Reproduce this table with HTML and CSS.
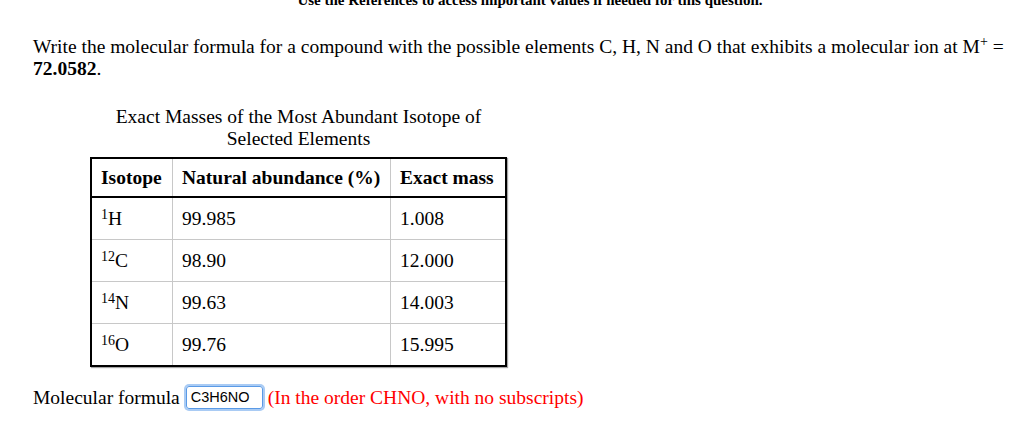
FILE: index.html
```html
<!DOCTYPE html>
<html>
<head>
<meta charset="utf-8">
<link rel="stylesheet" href="styles.css">
</head>
<body>
<div class="refs">Use the References to access important values if needed for this question.</div>
<div class="question">
  <p class="prompt">Write the molecular formula for a compound with the possible elements C, H, N and O that exhibits a molecular ion at M<sup class="charge">+</sup> = <b>72.0582</b>.</p>
  <table class="iso">
    <caption>Exact Masses of the Most Abundant Isotope of Selected Elements</caption>
    <thead>
      <tr><th class="c1">Isotope</th><th class="c2">Natural abundance (%)</th><th class="c3">Exact mass</th></tr>
    </thead>
    <tbody>
      <tr><td><sup>1</sup>H</td><td>99.985</td><td>1.008</td></tr>
      <tr><td><sup>12</sup>C</td><td>98.90</td><td>12.000</td></tr>
      <tr><td><sup>14</sup>N</td><td>99.63</td><td>14.003</td></tr>
      <tr><td><sup>16</sup>O</td><td>99.76</td><td>15.995</td></tr>
    </tbody>
  </table>
  <div class="answer">
    <span>Molecular formula</span>
    <span class="field">C3H6NO</span>
    <span class="hint">(In the order CHNO, with no subscripts)</span>
  </div>
</div>
</body>
</html>
```
FILE: styles.css
```css
html, body {
  margin: 0;
  padding: 0;
  background: #fff;
}
body {
  font-family: "Liberation Serif", "Times New Roman", serif;
  font-size: 19.5px;
  color: #000;
  width: 1024px;
  height: 435px;
  overflow: hidden;
}
.refs {
  font-weight: bold;
  font-size: 15px;
  line-height: 18px;
  text-align: center;
  padding-left: 36px;
  margin-top: -9px;
}
.question {
  padding-left: 33px;
}
.prompt {
  margin: 27px 0 0 0;
  line-height: 22px;
}
.charge {
  font-size: 14px;
  line-height: 0;
}
.iso {
  margin: 26px 0 0 57px;
  border-collapse: collapse;
  border: 2px solid #000;
  box-shadow: 1px 1px 1px rgba(0,0,0,0.35);
}
.iso caption {
  line-height: 22px;
  padding: 0 20px 7px;
}
.iso th {
  font-weight: bold;
  text-align: left;
  height: 37px;
  padding: 0 9px;
  border-bottom: 2px solid #000;
  border-right: 1px solid #c8c8c8;
  white-space: nowrap;
}
.iso td {
  height: 41px;
  padding: 0 9px;
  border: 1px solid #c8c8c8;
}
.iso .c1 { width: 62px; }
.iso .c2 { width: 199px; }
.iso .c3 { width: 96px; }
.iso sup {
  font-size: 14px;
  line-height: 0;
  vertical-align: 6px;
}
.answer {
  margin-top: 19px;
  display: flex;
  align-items: center;
  gap: 3px;
}
.field {
  display: inline-block;
  font-family: "Liberation Sans", Arial, sans-serif;
  font-size: 14.5px;
  width: 67px;
  height: 21px;
  line-height: 21px;
  padding: 0 4px;
  border: 1px solid #5a9ae6;
  border-radius: 3px;
  box-shadow: 0 0 0 2px #a9cbf4;
  margin: 0 2px 0 3px;
}
.hint {
  color: #f00;
}
```
